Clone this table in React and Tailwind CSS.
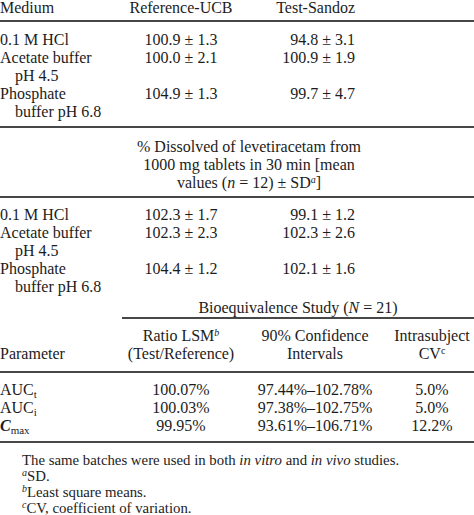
import React from 'react';

const dissolution1 = [
    { medium: ['0.1 M HCl'], ref: '100.9 ± 1.3', test: '94.8 ± 3.1' },
    { medium: ['Acetate buffer', 'pH 4.5'], ref: '100.0 ± 2.1', test: '100.9 ± 1.9' },
    { medium: ['Phosphate', 'buffer pH 6.8'], ref: '104.9 ± 1.3', test: '99.7 ± 4.7' },
];

const dissolution2 = [
    { medium: ['0.1 M HCl'], ref: '102.3 ± 1.7', test: '99.1 ± 1.2' },
    { medium: ['Acetate buffer', 'pH 4.5'], ref: '102.3 ± 2.3', test: '102.3 ± 2.6' },
    { medium: ['Phosphate', 'buffer pH 6.8'], ref: '104.4 ± 1.2', test: '102.1 ± 1.6' },
];

const Rule = ({ className = '' }) => <div className={`h-[2px] bg-[#474747] ${className}`}></div>;

const DissolutionRows = ({ rows }) => (
    <div className="grid grid-cols-[122px_118px_115px]">
        {rows.map((row, i) => (
            <React.Fragment key={i}>
                <div>
                    {row.medium.map((line, j) => (
                        <div key={j} className={`h-[18px] whitespace-nowrap ${j > 0 ? 'pl-[15px]' : ''}`}>{line}</div>
                    ))}
                </div>
                <div className="h-[18px] text-center whitespace-nowrap">{row.ref}</div>
                <div className="h-[18px] text-right whitespace-nowrap">{row.test}</div>
            </React.Fragment>
        ))}
    </div>
);

// preflight already lifts <sup> by -0.5em
const Sup = ({ children, italic = true }) => (
    <sup className={`text-[10px] ${italic ? 'italic' : ''}`}>{children}</sup>
);

const bioRows = [
    { param: <>AUC<sub className="text-[11px]">t</sub></>, ratio: '100.07%', ci: '97.44%–102.78%', cv: '5.0%' },
    { param: <>AUC<sub className="text-[11px]">i</sub></>, ratio: '100.03%', ci: '97.38%–102.75%', cv: '5.0%' },
    { param: <><span className="font-bold italic">C</span><sub className="text-[11px]">max</sub></>, ratio: '99.95%', ci: '93.61%–106.71%', cv: '12.2%' },
];

export default function App() {
    return (
        <div className="w-[474px] h-[515px] overflow-hidden bg-white text-[#1c1c1c] text-[16px] leading-[18px]" style={{ fontFamily: '"Liberation Serif", "Times New Roman", serif' }}>
            {/* header */}
            <div className="grid grid-cols-[122px_118px_115px] h-[20px] -mt-[1px]">
                <div>Medium</div>
                <div className="text-center whitespace-nowrap">Reference-UCB</div>
                <div className="text-right whitespace-nowrap">Test-Sandoz</div>
            </div>
            <Rule className="mt-[1px]" />

            <div className="pt-[9px] pb-[5px]">
                <DissolutionRows rows={dissolution1} />
            </div>
            <Rule />

            <div className="pt-[10px] pb-[4px] ml-[122px] w-[254px] text-center">
                <div className="h-[18px]">% Dissolved of levetiracetam from</div>
                <div className="h-[18px]">1000 mg tablets in 30 min [mean</div>
                <div className="h-[18px]">values (<i>n</i> = 12) ± SD<Sup>a</Sup>]</div>
            </div>
            <Rule />

            <div className="pt-[8px]">
                <DissolutionRows rows={dissolution2} />
            </div>

            {/* bioequivalence */}
            <div className="pt-[3px] ml-[122px] text-center h-[21px]">
                Bioequivalence Study (<i>N</i> = 21)
            </div>
            <Rule className="ml-[122px]" />

            <div className="grid grid-cols-[122px_118px_150px_84px] pt-[8px] pb-[8px] items-end">
                <div className="h-[18px]">Parameter</div>
                <div className="text-center">
                    <div className="h-[18px]">Ratio LSM<Sup>b</Sup></div>
                    <div className="h-[18px] whitespace-nowrap">(Test/Reference)</div>
                </div>
                <div className="text-center">
                    <div className="h-[18px]">90% Confidence</div>
                    <div className="h-[18px]">Intervals</div>
                </div>
                <div className="text-center">
                    <div className="h-[18px]">Intrasubject</div>
                    <div className="h-[18px]">CV<Sup italic={false}>c</Sup></div>
                </div>
            </div>
            <Rule />

            <div className="grid grid-cols-[122px_118px_150px_84px] pt-[8px] pb-[6px]">
                {bioRows.map((row, i) => (
                    <React.Fragment key={i}>
                        <div className="h-[18px] whitespace-nowrap">{row.param}</div>
                        <div className="h-[18px] text-center">{row.ratio}</div>
                        <div className="h-[18px] text-center whitespace-nowrap">{row.ci}</div>
                        <div className="h-[18px] text-center">{row.cv}</div>
                    </React.Fragment>
                ))}
            </div>
            <Rule />

            {/* footnotes */}
            <div className="pt-[9px] pl-[22px] text-[14.8px] leading-[16px]">
                <div className="whitespace-nowrap">The same batches were used in both <i>in vitro</i> and <i>in vivo</i> studies.</div>
                <div><Sup>a</Sup>SD.</div>
                <div><Sup>b</Sup>Least square means.</div>
                <div><Sup>c</Sup>CV, coefficient of variation.</div>
            </div>
        </div>
    );
}
